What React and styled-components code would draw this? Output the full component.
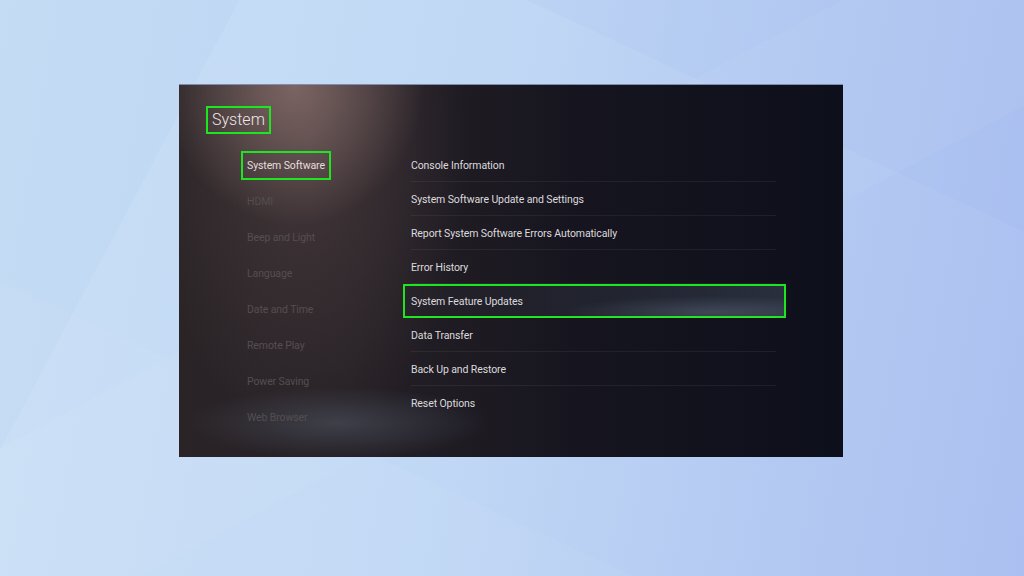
import React from "react";
import styled, { createGlobalStyle } from "styled-components";

const categories = [
  "System Software",
  "HDMI",
  "Beep and Light",
  "Language",
  "Date and Time",
  "Remote Play",
  "Power Saving",
  "Web Browser",
];

const options = [
  "Console Information",
  "System Software Update and Settings",
  "Report System Software Errors Automatically",
  "Error History",
  "System Feature Updates",
  "Data Transfer",
  "Back Up and Restore",
  "Reset Options",
];

const App = () => {
  return (
    <Page>
      <GlobalStyle />
      <Screen>
        <Title>System</Title>
        <Columns>
          <Sidebar>
            {categories.map((name, i) => (
              <Category key={name}>
                <CategoryLabel active={i === 0}>{name}</CategoryLabel>
              </Category>
            ))}
          </Sidebar>
          <OptionList>
            {options.map((name) => (
              <Option key={name} focused={name === "System Feature Updates"}>
                <OptionLabel last={name === "Reset Options"}>{name}</OptionLabel>
              </Option>
            ))}
          </OptionList>
        </Columns>
      </Screen>
    </Page>
  );
};

export default App;

const GlobalStyle = createGlobalStyle`
  html, body {
    margin: 0;
    padding: 0;
  }
  body {
    font-family: Roboto, "Noto Sans", sans-serif;
  }
`;

const Page = styled.div`
  width: 1024px;
  height: 576px;
  box-sizing: border-box;
  padding-top: 84px;
  overflow: hidden;
  background:
    linear-gradient(152deg, rgba(255, 255, 255, 0) 0 40%, rgba(255, 255, 255, 0.035) 40% 58%, rgba(255, 255, 255, 0) 58%),
    linear-gradient(25deg, rgba(255, 255, 255, 0.04) 0 28%, rgba(255, 255, 255, 0) 28%),
    linear-gradient(205deg, rgba(110, 140, 225, 0.05) 0 22%, rgba(255, 255, 255, 0) 22%),
    linear-gradient(118deg, rgba(90, 130, 200, 0.04) 0 18%, rgba(255, 255, 255, 0) 18%),
    linear-gradient(100deg, #c9dff6 0%, #c1d8f5 45%, #b4caf2 75%, #abc0f0 100%);
`;

const Screen = styled.div`
  width: 664px;
  height: 373px;
  margin-left: 179px;
  box-sizing: border-box;
  padding: 21px 0 0 27px;
  border-top: 1px solid #7f8bb0;
  background:
    radial-gradient(ellipse 150px 36px at 160px 338px, rgba(90, 100, 116, 0.45), rgba(90, 100, 116, 0) 100%),
    radial-gradient(ellipse 130px 140px at 115px 0px, rgba(150, 122, 118, 0.7), rgba(150, 122, 118, 0) 100%),
    radial-gradient(ellipse 160px 300px at 130px 60px, rgba(92, 74, 74, 0.55), rgba(92, 74, 74, 0) 100%),
    linear-gradient(90deg, #2a2427 0%, #241f25 30%, #16151f 60%, #0d0f1b 100%);
`;

const Title = styled.h1`
  display: inline-block;
  margin: 0;
  height: 28px;
  box-sizing: border-box;
  padding: 0 4px;
  border: 2px solid #1ee61e;
  font-size: 16px;
  font-weight: 300;
  line-height: 24px;
  color: #ece7e6;
`;

const Columns = styled.div`
  display: grid;
  grid-template-columns: 162px 383px;
  margin: 13px 0 0 35px;
`;

const Sidebar = styled.div`
  display: flex;
  flex-direction: column;
`;

const Category = styled.div`
  height: 36px;
  display: flex;
  align-items: center;
`;

const CategoryLabel = styled.span`
  height: 29px;
  box-sizing: border-box;
  padding: 0 4px;
  display: flex;
  align-items: center;
  border: 2px solid ${(p) => (p.active ? "#1ee61e" : "transparent")};
  font-size: 10.5px;
  color: ${(p) => (p.active ? "#e4dede" : "#544e51")};
  letter-spacing: -0.1px;
`;

const OptionList = styled.div`
  display: flex;
  flex-direction: column;
  padding-top: 1px;
`;

const Option = styled.div`
  height: 34px;
  box-sizing: border-box;
  padding: 0 10px 0 8px;
  display: flex;
  box-shadow: ${(p) => (p.focused ? "inset 0 0 0 2px #1ee61e" : "none")};
  background: ${(p) =>
    p.focused
      ? "radial-gradient(ellipse 150px 16px at 310px 28px, rgba(110,125,145,0.35), rgba(110,125,145,0)), linear-gradient(90deg, rgba(40,40,48,0.2) 0%, rgba(50,56,70,0.55) 70%, rgba(56,64,80,0.65) 100%)"
      : "transparent"};
`;

const OptionLabel = styled.div`
  flex: 1;
  display: flex;
  align-items: center;
  padding-top: 1px;
  border-bottom: 1px solid ${(p) => (p.last ? "transparent" : "rgba(255, 255, 255, 0.06)")};
  font-size: 10.5px;
  color: #dcdadd;
  letter-spacing: -0.1px;
`;
